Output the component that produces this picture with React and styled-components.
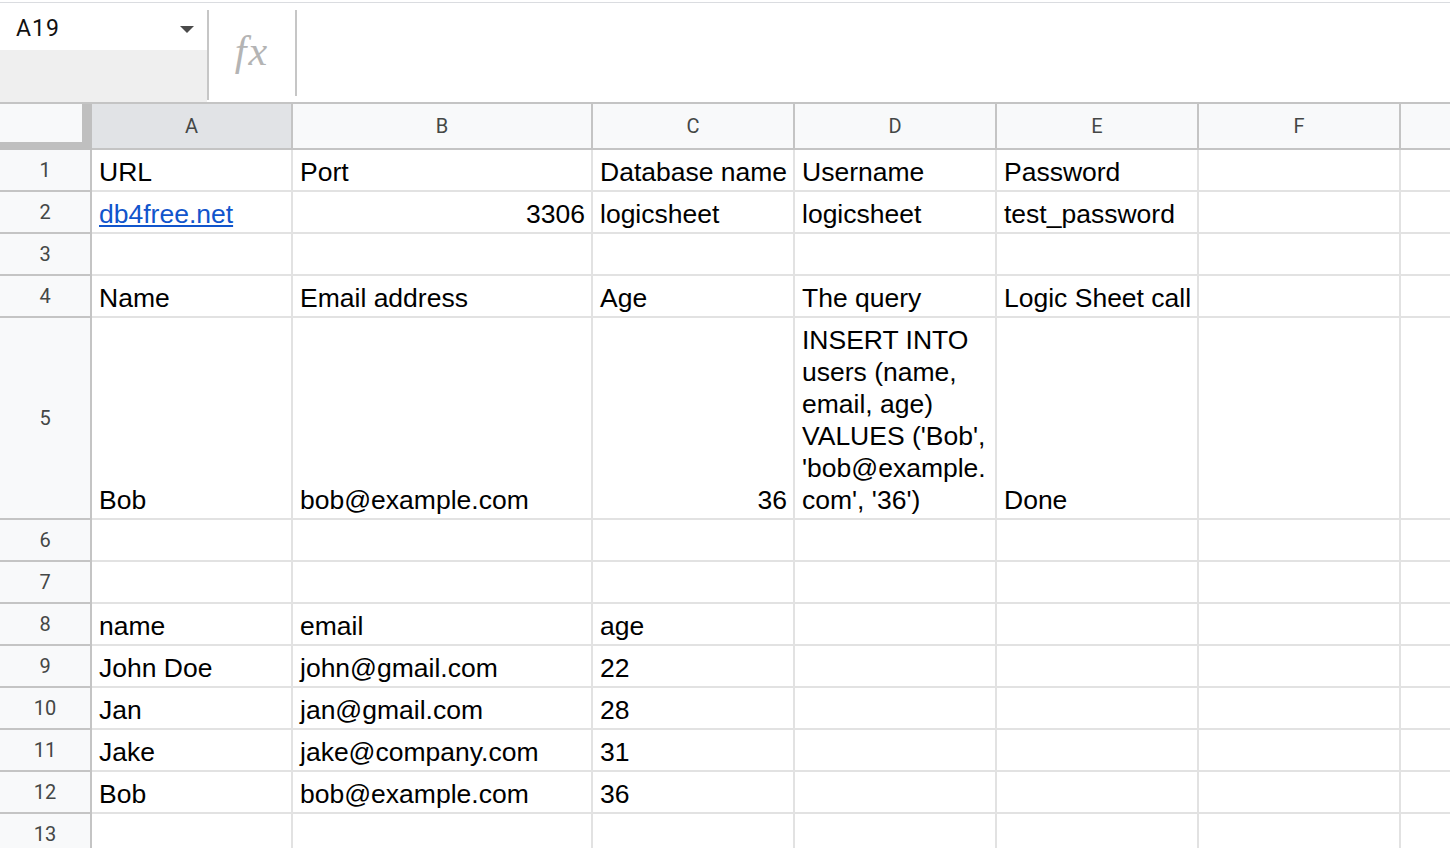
import styled, { createGlobalStyle } from "styled-components";

const COLUMNS = ["A", "B", "C", "D", "E", "F", ""];

const ROWS = [
  { height: 42, cells: ["URL", "Port", "Database name", "Username", "Password"] },
  {
    height: 42,
    cells: [
      { text: "db4free.net", link: true },
      { text: "3306", right: true },
      "logicsheet",
      "logicsheet",
      "test_password",
    ],
  },
  { height: 42, cells: [] },
  { height: 42, cells: ["Name", "Email address", "Age", "The query", "Logic Sheet call"] },
  {
    height: 202,
    cells: [
      "Bob",
      "bob@example.com",
      { text: "36", right: true },
      {
        text: (
          <>
            INSERT INTO users (name, email, age) VALUES ('Bob', 'bob@example.
            <wbr />
            com', '36')
          </>
        ),
        wrap: true,
      },
      "Done",
    ],
  },
  { height: 42, cells: [] },
  { height: 42, cells: [] },
  { height: 42, cells: ["name", "email", "age"] },
  { height: 42, cells: ["John Doe", "john@gmail.com", "22"] },
  { height: 42, cells: ["Jan", "jan@gmail.com", "28"] },
  { height: 42, cells: ["Jake", "jake@company.com", "31"] },
  { height: 42, cells: ["Bob", "bob@example.com", "36"] },
  { height: 42, cells: [] },
];

export default function App() {
  return (
    <Page>
      <GlobalStyle />
      <Toolbar>
        <NameBox>
          <NameField>
            <span>A19</span>
            <Caret />
          </NameField>
          <NameFiller />
        </NameBox>
        <Divider $bottom={2} />
        <FxBox>fx</FxBox>
        <Divider $bottom={6} />
        <FormulaInput />
      </Toolbar>

      <Sheet $rows={ROWS.map((r) => r.height + "px").join(" ")}>
        <Corner />
        {COLUMNS.map((col, i) => (
          <ColumnHeader key={i} $selected={col === "A"}>
            {col}
          </ColumnHeader>
        ))}

        {ROWS.map((row, r) => (
          <Row key={r} row={row} index={r + 1} />
        ))}
      </Sheet>
    </Page>
  );
}

function Row({ row, index }) {
  return (
    <>
      <RowHeader>{index}</RowHeader>
      {COLUMNS.map((_, c) => {
        const raw = row.cells[c];
        const cell = raw && typeof raw === "object" && "text" in raw ? raw : { text: raw };
        return (
          <Cell key={c} $right={cell.right} $wrap={cell.wrap}>
            {cell.link ? <CellLink>{cell.text}</CellLink> : cell.text}
          </Cell>
        );
      })}
    </>
  );
}

const GlobalStyle = createGlobalStyle`
  html, body {
    margin: 0;
    padding: 0;
    background: #ffffff;
    overflow: hidden;
  }
  body {
    font-family: "Liberation Sans", Arial, sans-serif;
  }
`;

const Page = styled.div`
  width: 1450px;
  height: 848px;
  overflow: hidden;
  background: #ffffff;
`;

const Toolbar = styled.div`
  display: flex;
  margin-top: 2px;
  height: 99px;
  border-top: 1px solid #dadce0;
`;

const NameBox = styled.div`
  display: flex;
  flex-direction: column;
  width: 207px;
`;

const NameField = styled.div`
  display: flex;
  align-items: center;
  justify-content: space-between;
  height: 47px;
  padding: 0 13px 0 16px;
  box-sizing: border-box;
  background: #ffffff;

  span {
    font-family: Roboto, "Liberation Sans", sans-serif;
    font-size: 23px;
    letter-spacing: 1px;
    color: #111111;
    margin-top: 3px;
  }
`;

const Caret = styled.div`
  width: 0;
  height: 0;
  border-left: 7px solid transparent;
  border-right: 7px solid transparent;
  border-top: 7px solid #4a4a4a;
  margin-top: 6px;
`;

const NameFiller = styled.div`
  flex: 1;
  background: #efefef;
`;

const Divider = styled.div`
  width: 2px;
  margin: 7px 0 ${(p) => p.$bottom}px;
  background: #c6c6c6;
`;

const FxBox = styled.div`
  width: 86px;
  display: flex;
  align-items: center;
  justify-content: center;
  font-family: "Liberation Serif", "Times New Roman", serif;
  font-style: italic;
  font-size: 42px;
  letter-spacing: 2px;
  color: #b4b4b4;
  padding-bottom: 4px;
  box-sizing: border-box;
`;

const FormulaInput = styled.div`
  flex: 1;
  background: #ffffff;
`;

const Sheet = styled.div`
  display: grid;
  grid-template-columns: 92px 201px 300px 202px 202px 202px 202px 202px;
  grid-template-rows: 46px ${(p) => p.$rows};
  border-top: 2px solid #c4c4c4;
`;

const Corner = styled.div`
  background: #f8f9fa;
  border-right: 10px solid #bfbfbf;
  border-bottom: 8px solid #bfbfbf;
  box-sizing: border-box;
`;

const ColumnHeader = styled.div`
  display: flex;
  align-items: center;
  justify-content: center;
  background: ${(p) => (p.$selected ? "#e1e3e6" : "#f8f9fa")};
  border-right: 2px solid #c4c4c4;
  border-bottom: 2px solid #c4c4c4;
  box-sizing: border-box;
  font-family: Roboto, "Liberation Sans", sans-serif;
  font-size: 20px;
  color: #444746;
`;

const RowHeader = styled.div`
  display: flex;
  align-items: center;
  justify-content: center;
  background: #f8f9fa;
  border-right: 2px solid #c4c4c4;
  border-bottom: 2px solid #c4c4c4;
  box-sizing: border-box;
  font-family: Roboto, "Liberation Sans", sans-serif;
  font-size: 20px;
  color: #444746;
`;

const Cell = styled.div`
  display: flex;
  align-items: flex-end;
  justify-content: ${(p) => (p.$right ? "flex-end" : "flex-start")};
  padding: 0 6px 2px 7px;
  border-right: 2px solid #e2e2e2;
  border-bottom: 2px solid #e2e2e2;
  box-sizing: border-box;
  overflow: hidden;
  font-size: 26.5px;
  line-height: 32px;
  color: #000000;
  white-space: ${(p) => (p.$wrap ? "normal" : "nowrap")};
`;

const CellLink = styled.span`
  color: #1155cc;
  text-decoration: underline;
`;
